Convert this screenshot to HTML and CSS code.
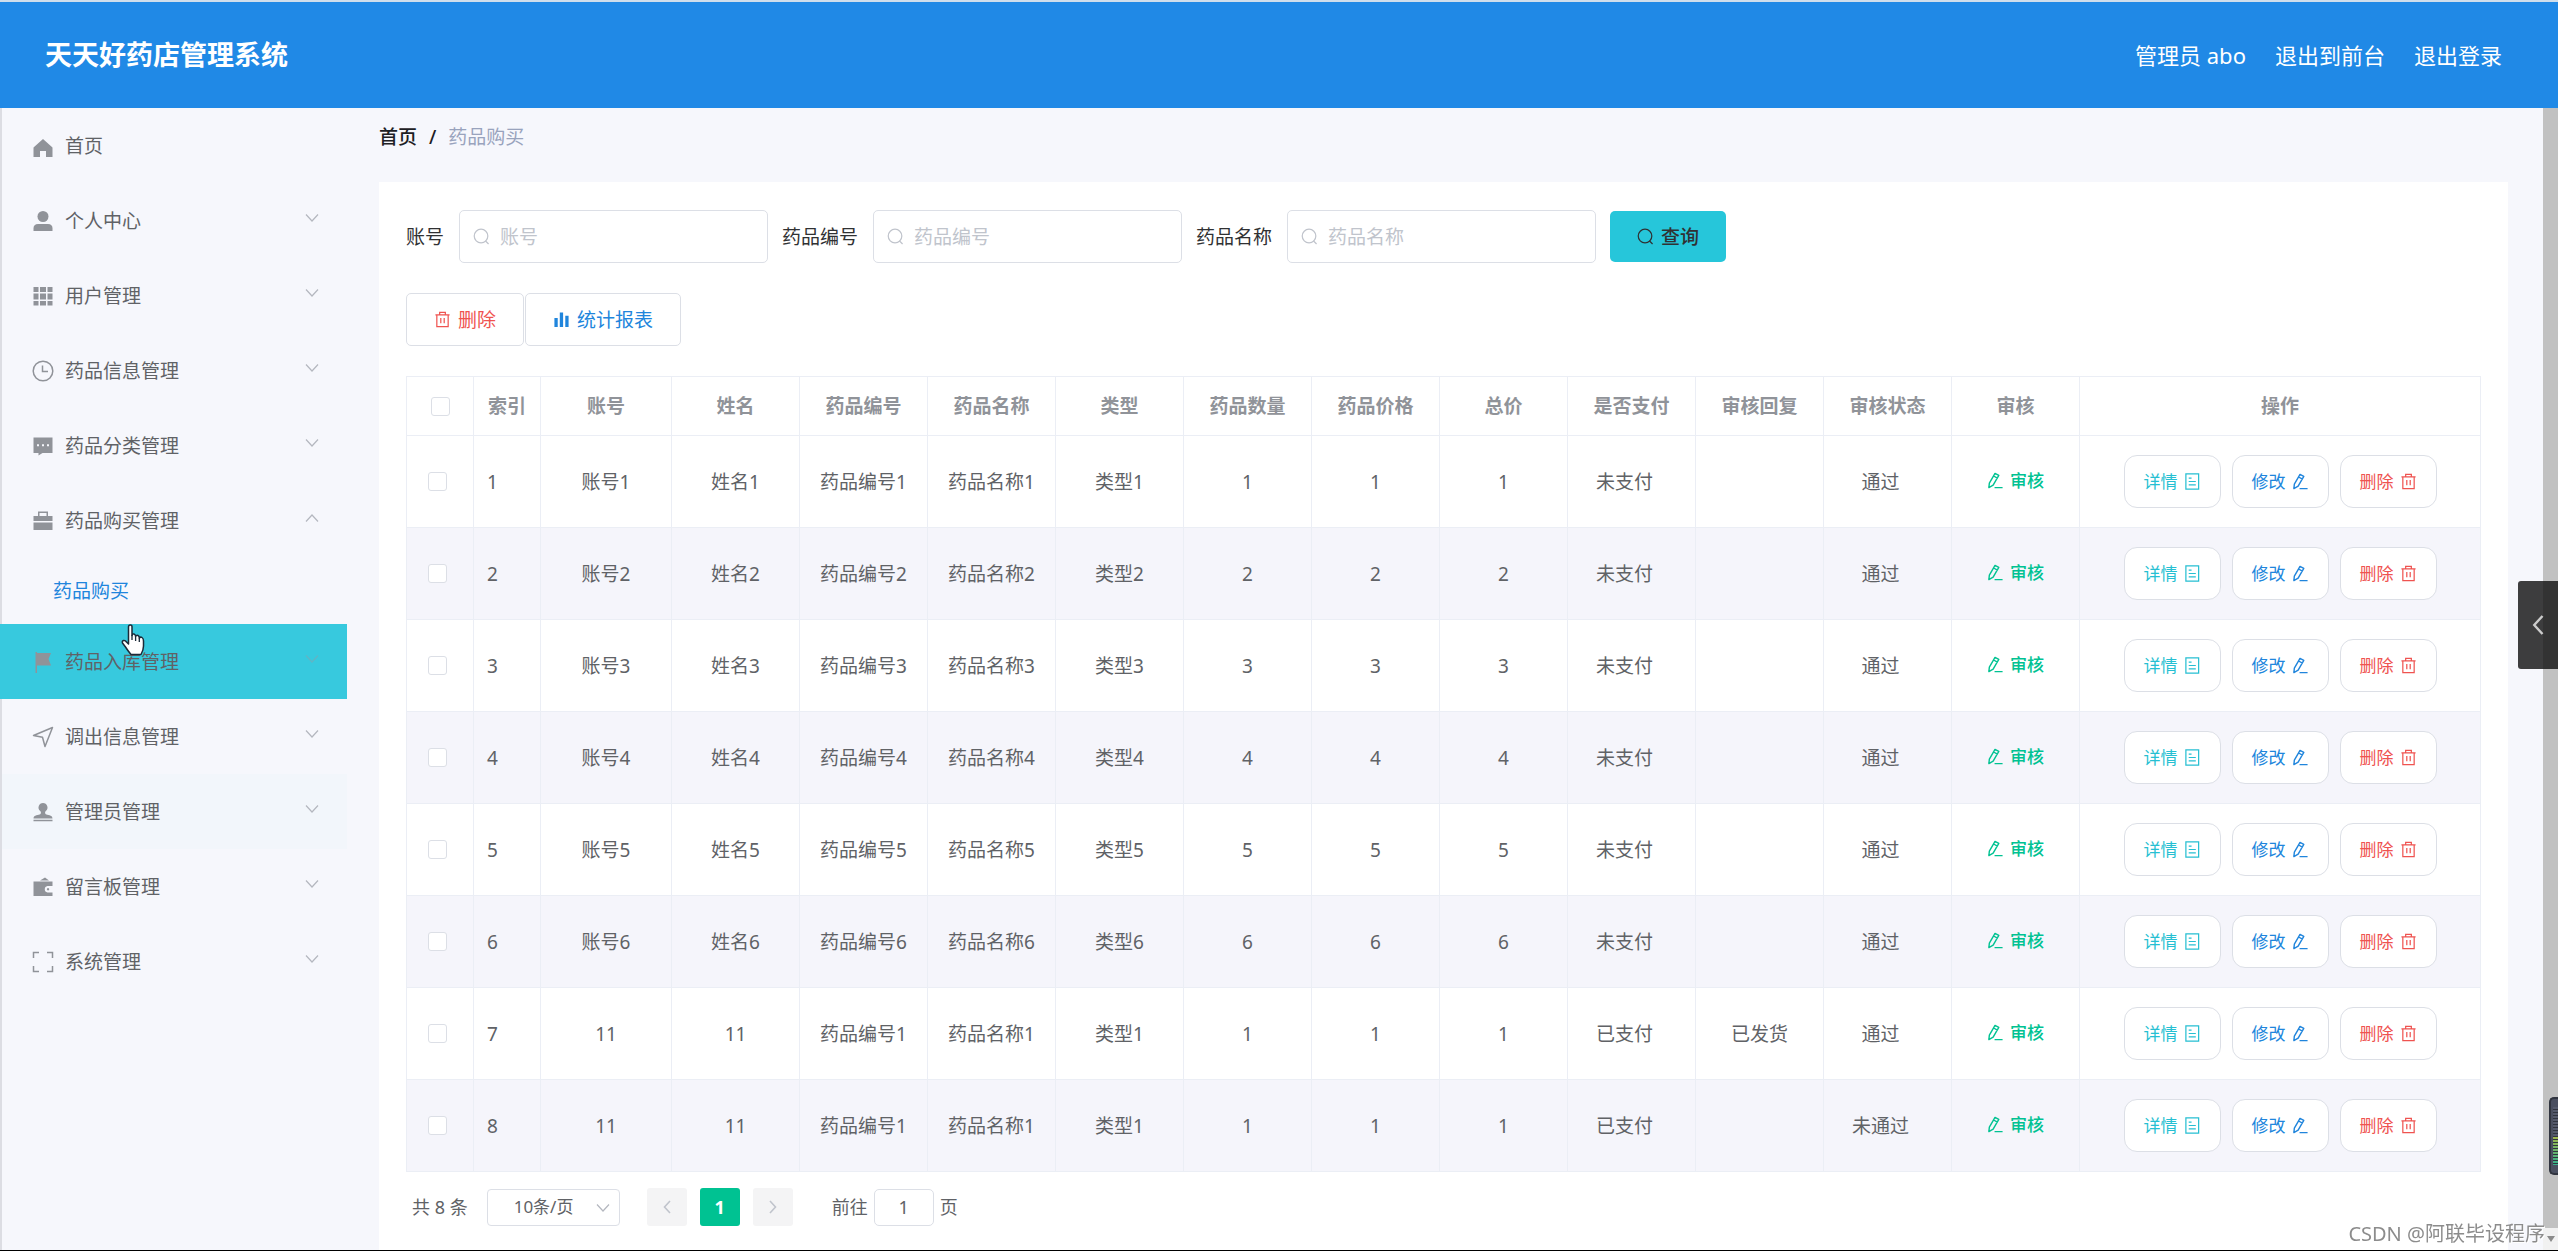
FILE: index.html
```
<!DOCTYPE html>
<html lang="zh-CN">
<head>
	<meta charset="utf-8">
	<title>天天好药店管理系统</title>
	<link rel="stylesheet" href="styles.css">
</head>
<body>

<svg class="sprite" aria-hidden="true">
	<symbol id="i-home" viewBox="0 0 22 22"><path d="M11 4L1.500 12.500V22H8V16H14V22H20.500V12.500Z"/></symbol>
	<symbol id="i-user" viewBox="0 0 22 22"><circle cx="11" cy="6.500" r="5.500"/><path d="M1.500 21V18.500Q1.500 14 6 14H16Q20.500 14 20.500 18.500V21Z"/></symbol>
	<symbol id="i-grid" viewBox="0 0 22 22"><path d="M1.500 2h5v5h-5zM8 2h6v5H8zM15.500 2h5v5h-5zM1.500 8.500h5v6h-5zM8 8.500h6v6H8zM15.500 8.500h5v6h-5zM1.500 16h5v4.500h-5zM8 16h6v4.500H8zM15.500 16h5v4.500h-5z"/></symbol>
	<symbol id="i-time" viewBox="0 0 22 22"><g fill="none" stroke="currentColor" stroke-width="1.500"><circle cx="11" cy="11" r="9.800"/><path d="M10.500 5.500V11.500H16"/></g></symbol>
	<symbol id="i-chat" viewBox="0 0 22 22"><path fill-rule="evenodd" d="M1.500 2.500h19v15.500h-10L6.500 20.500V18h-5zM5 9.200v2h2v-2zM10 9.200v2h2v-2zM15 9.200v2h2v-2z"/></symbol>
	<symbol id="i-case" viewBox="0 0 22 22"><path fill-rule="evenodd" d="M6 6V1.500h10V6h4.500v5h-19V6zM7.500 6h7V3h-7zM1.500 12.500h19v7.500h-19z"/></symbol>
	<symbol id="i-flag" viewBox="0 0 22 22"><path d="M3.500 1h1.500v1h14L16.500 8L19 14.500H5V22H3.500z"/></symbol>
	<symbol id="i-send" viewBox="0 0 22 22"><path fill="none" stroke="currentColor" stroke-width="1.500" stroke-linejoin="round" d="M1.500 9.500L20.500 1.500L13 20.500L10.500 11.200Z"/></symbol>
	<symbol id="i-admin" viewBox="0 0 22 22"><path d="M11 2a4.500 4.500 0 0 1 2.800 8c-1 1-1 2.500 0 3.200C15 14 20.500 13.500 20.500 17.500h-19C1.500 13.500 7 14 8.200 13.200c1-.7 1-2.200 0-3.200A4.500 4.500 0 0 1 11 2zM1.500 18.800h19v1.500h-19z"/></symbol>
	<symbol id="i-wallet" viewBox="0 0 22 22"><path fill-rule="evenodd" d="M8 4.500L13 1.500L17 4.500ZM1.500 5.500h19v4.500H15.500a3.300 3.300 0 0 0 0 6.500h5V20h-19zM16 12a1.200 1.200 0 1 0 .1 0z"/></symbol>
	<symbol id="i-full" viewBox="0 0 22 22"><path fill="none" stroke="currentColor" stroke-width="1.500" d="M1.500 7V1.500H7M15 1.500h5.500V7M20.500 15v5.500H15M7 20.500H1.500V15"/></symbol>
	<symbol id="i-down" viewBox="0 0 16 16"><path fill="none" stroke="currentColor" stroke-width="1.200" d="M2 4.500L8 11L14 4.500"/></symbol>
	<symbol id="i-up" viewBox="0 0 16 16"><path fill="none" stroke="currentColor" stroke-width="1.200" d="M2 11.500L8 5L14 11.500"/></symbol>
	<symbol id="i-left" viewBox="0 0 16 16"><path fill="none" stroke="currentColor" stroke-width="1.600" d="M11 2L5.500 8L11 14"/></symbol>
	<symbol id="i-right" viewBox="0 0 16 16"><path fill="none" stroke="currentColor" stroke-width="1.600" d="M5 2L10.500 8L5 14"/></symbol>
	<symbol id="i-search" viewBox="0 0 18 18"><g fill="none" stroke="currentColor" stroke-width="1.300"><circle cx="8.500" cy="8.500" r="7.200"/><path d="M13 13.500L16.500 17"/></g></symbol>
	<symbol id="i-trash" viewBox="0 0 18 18"><path fill="none" stroke="currentColor" stroke-width="1.300" d="M1.500 4H16.500M6 4V1.500H12V4M3 4V16.500H15V4M7.200 7.500V13M10.800 7.500V13"/></symbol>
	<symbol id="i-chart" viewBox="0 0 18 18"><path d="M1.500 7.500h3.500V17H1.500zM7.200 1.500h3.500V17H7.200zM13 5h3.500v12H13z"/></symbol>
	<symbol id="i-edit" viewBox="0 0 18 18"><path fill="none" stroke="currentColor" stroke-width="1.500" stroke-linejoin="round" d="M8.500 1.500L12.500 3.500L6.500 14L2 16.500L2.500 11.800ZM7.500 4.500L11 6.500M8 16.500H16.500"/></symbol>
	<symbol id="i-doc" viewBox="0 0 18 18"><path fill="none" stroke="currentColor" stroke-width="1.300" d="M2 1H15.500V17H2zM5 5.500H8M5 9H12.500M5 12.500H12.500"/></symbol>
</svg>

<header class="header">
	<h1 class="header-title">天天好药店管理系统</h1>
	<nav class="header-links">
		<span>管理员 abo</span>
		<a href="#">退出到前台</a>
		<a href="#">退出登录</a>
	</nav>
</header>

<div class="container">
	<aside class="sidebar">
		<ul class="menu">
			<li><a class="menu-item" href="#"><svg class="menu-icon"><use href="#i-home"/></svg>首页</a></li>
			<li><a class="menu-item" href="#"><svg class="menu-icon"><use href="#i-user"/></svg>个人中心<svg class="arrow"><use href="#i-down"/></svg></a></li>
			<li><a class="menu-item" href="#"><svg class="menu-icon"><use href="#i-grid"/></svg>用户管理<svg class="arrow"><use href="#i-down"/></svg></a></li>
			<li><a class="menu-item" href="#"><svg class="menu-icon"><use href="#i-time"/></svg>药品信息管理<svg class="arrow"><use href="#i-down"/></svg></a></li>
			<li><a class="menu-item" href="#"><svg class="menu-icon"><use href="#i-chat"/></svg>药品分类管理<svg class="arrow"><use href="#i-down"/></svg></a></li>
			<li>
				<a class="menu-item" href="#"><svg class="menu-icon"><use href="#i-case"/></svg>药品购买管理<svg class="arrow"><use href="#i-up"/></svg></a>
				<a class="submenu-item" href="#">药品购买</a>
			</li>
			<li><a class="menu-item active" href="#"><svg class="menu-icon"><use href="#i-flag"/></svg>药品入库管理<svg class="arrow"><use href="#i-down"/></svg></a></li>
			<li><a class="menu-item" href="#"><svg class="menu-icon"><use href="#i-send"/></svg>调出信息管理<svg class="arrow"><use href="#i-down"/></svg></a></li>
			<li><a class="menu-item fading" href="#"><svg class="menu-icon"><use href="#i-admin"/></svg>管理员管理<svg class="arrow"><use href="#i-down"/></svg></a></li>
			<li><a class="menu-item" href="#"><svg class="menu-icon"><use href="#i-wallet"/></svg>留言板管理<svg class="arrow"><use href="#i-down"/></svg></a></li>
			<li><a class="menu-item" href="#"><svg class="menu-icon"><use href="#i-full"/></svg>系统管理<svg class="arrow"><use href="#i-down"/></svg></a></li>
		</ul>
	</aside>

	<main class="main">
		<nav class="breadcrumb">
			<a href="#">首页</a>
			<b>/</b>
			<span>药品购买</span>
		</nav>

		<section class="content">
			<form class="search">
				<label for="account">账号</label>
				<div class="search-box">
					<svg class="icon"><use href="#i-search"/></svg>
					<input type="text" id="account" placeholder="账号">
				</div>
				<label for="code">药品编号</label>
				<div class="search-box">
					<svg class="icon"><use href="#i-search"/></svg>
					<input type="text" id="code" placeholder="药品编号">
				</div>
				<label for="name">药品名称</label>
				<div class="search-box">
					<svg class="icon"><use href="#i-search"/></svg>
					<input type="text" id="name" placeholder="药品名称">
				</div>
				<button type="button" class="btn btn-search"><svg class="icon"><use href="#i-search"/></svg>查询</button>
			</form>

			<div class="actions">
				<button type="button" class="btn red"><svg class="icon"><use href="#i-trash"/></svg>删除</button>
				<button type="button" class="btn blue"><svg class="icon"><use href="#i-chart"/></svg>统计报表</button>
			</div>

			<table class="table">
				<colgroup>
					<col class="col-small">
					<col class="col-small">
					<col class="col-account">
					<col span="11">
					<col class="col-ops">
				</colgroup>
				<thead>
					<tr>
						<th><input type="checkbox" class="checkbox" aria-label="全选"></th>
						<th>索引</th>
						<th>账号</th>
						<th>姓名</th>
						<th>药品编号</th>
						<th>药品名称</th>
						<th>类型</th>
						<th>药品数量</th>
						<th>药品价格</th>
						<th>总价</th>
						<th>是否支付</th>
						<th>审核回复</th>
						<th>审核状态</th>
						<th>审核</th>
						<th>操作</th>
					</tr>
				</thead>
				<tbody id="rows"></tbody>
			</table>

			<div class="pagination">
				<span>共 8 条</span>
				<div class="page-size">
					<select aria-label="每页条数">
						<option>10条/页</option>
						<option>20条/页</option>
						<option>50条/页</option>
					</select>
					<svg class="arrow"><use href="#i-down"/></svg>
				</div>
				<div class="pager">
					<button type="button" aria-label="上一页" disabled><svg><use href="#i-left"/></svg></button>
					<button type="button" class="current">1</button>
					<button type="button" aria-label="下一页" disabled><svg><use href="#i-right"/></svg></button>
				</div>
				<div class="jump">
					<label for="page">前往</label>
					<input type="text" id="page" value="1">
					<span>页</span>
				</div>
			</div>
		</section>
	</main>

	<div class="scrollbar">
		<div class="scroll-thumb"></div>
		<div class="scroll-end"></div>
	</div>
</div>

<button type="button" class="drawer" aria-label="展开"><svg><use href="#i-left"/></svg></button>
<div class="meter"><div class="meter-bars"></div></div>
<div class="watermark">CSDN @阿联毕设程序</div>

<svg class="cursor" viewBox="0 0 24 32"><path fill="#fff" stroke="#1b2a38" stroke-width="1.500" stroke-linejoin="round" d="M7.500 3Q7.500 1 9.300 1T11 3V11.500Q11.500 9.500 13 10T14.600 12.500Q15.500 10.800 17 11.500T18.300 14Q19.500 12.500 21 13.500T22.500 17V22Q22.500 26 20 30.500H10Q7 27 4.500 23L1.500 19Q.8 17 2.500 16.500T5.500 18L7.500 20Z"/><path fill="none" stroke="#1b2a38" stroke-width="1.300" d="M11 11V16M14.600 12.500V17M18.300 14V18"/></svg>

<script src="script.js"></script>
</body>
</html>
```

FILE: styles.css
```
* {
	box-sizing: border-box;
}
body {
	display: flex;
	flex-direction: column;
	height: 100vh;
	margin: 0;
	overflow: hidden;
	border-top: 2px solid #cfdeec;
	border-bottom: 1px solid #000;
	background: #f6f7fc;
	color: #606266;
	font-family: "Noto Sans", "Noto Sans CJK SC", sans-serif;
	font-size: 19px;
	line-height: 28px;
}
a {
	color: inherit;
	text-decoration: none;
}
button, input, select {
	font: inherit;
	color: inherit;
}
svg {
	fill: currentColor;
	flex: none;
}
.sprite {
	position: absolute;
	width: 0;
	height: 0;
}
.icon {
	width: 17px;
	height: 17px;
}

/* header */
.header {
	display: flex;
	flex: none;
	align-items: center;
	justify-content: space-between;
	height: 106px;
	padding: 0 56px 0 45px;
	background: #2089e6;
	color: #fff;
}
.header-title {
	margin: 0;
	font-size: 27px;
	line-height: 40px;
}
.header-links {
	display: flex;
	gap: 29px;
	font-size: 22px;
	line-height: 32px;
}

.container {
	display: flex;
	flex: 1;
	min-height: 0;
}

/* sidebar */
.sidebar {
	flex: none;
	width: 347px;
	border-left: 2px solid #dcdde3;
}
.menu {
	margin: 0;
	padding: 0;
	list-style: none;
}
.menu-item {
	display: flex;
	align-items: center;
	height: 75px;
	padding: 0 27px 0 30px;
}
.menu-item.active {
	margin-left: -2px;
	padding-left: 32px;
	background: #37c9de;
}
.menu-item.fading {
	background: #f2f6fb;
}
.menu-icon {
	width: 22px;
	height: 22px;
	margin-right: 11px;
	color: #909399;
}
.arrow {
	width: 16px;
	height: 16px;
	color: #b4b7bf;
}
.menu-item .arrow {
	margin: 0 0 5px auto;
}
.active .arrow {
	color: #62b4c4;
}
.submenu-item {
	display: flex;
	align-items: center;
	height: 66px;
	padding-left: 51px;
	color: #2085dc;
}

/* main */
.main {
	display: flex;
	flex: 1;
	flex-direction: column;
	min-width: 0;
	padding: 0 35px 0 32px;
}
.breadcrumb {
	display: flex;
	gap: 12px;
	padding: 15px 0 31px;
	color: #99a3bd;
}
.breadcrumb a, .breadcrumb b {
	color: #1d2024;
	font-weight: 500;
}
.content {
	flex: 1;
	padding: 28px 27px 0;
	background: #fff;
}
.search {
	display: flex;
	align-items: center;
	color: #303133;
}
.search label {
	margin-right: 15px;
}
.search-box {
	position: relative;
	width: 309px;
	margin-right: 14px;
}
.search-box .icon {
	position: absolute;
	top: 18px;
	left: 14px;
	color: #c0c4cc;
}
.search-box input {
	width: 100%;
	height: 53px;
	padding: 0 14px 0 40px;
	border: 1px solid #dcdfe6;
	border-radius: 5px;
	background: #fff;
	outline: none;
}
.search-box input::placeholder {
	color: #c0c4cc;
}
.btn {
	display: flex;
	align-items: center;
	gap: 7px;
	height: 53px;
	padding: 0 27px;
	border: 1px solid #dcdfe6;
	border-radius: 5px;
	background: #fff;
}
.btn-search {
	height: 51px;
	border: 0;
	background: #26c6da;
	font-weight: 500;
}
.actions {
	display: flex;
	gap: 1px;
	margin: 30px 0;
}
.red {
	color: #ef5350;
}
.blue {
	color: #2085dc;
}
.cyan {
	color: #26bfd2;
}

/* table */
.table {
	width: 100%;
	border-collapse: collapse;
	table-layout: fixed;
}
.col-small {
	width: 67px;
}
.col-account {
	width: 131px;
}
.col-ops {
	width: 401px;
}
.table th, .table td {
	height: 92px;
	padding: 0;
	border: 1px solid #ebeef5;
	text-align: center;
}
.table th {
	height: 59px;
	color: #909399;
	font-weight: 700;
}
.table tbody tr:nth-child(even) {
	background: #f5f5fb;
}
.table .index {
	padding-left: 13px;
	text-align: left;
}
.table .check {
	padding-right: 5px;
}
.table .state {
	padding-right: 14px;
}
.checkbox {
	display: block;
	width: 19px;
	height: 19px;
	margin: 0 auto;
	border: 1px solid #dcdfe6;
	border-radius: 3px;
	background: #fff;
	appearance: none;
}
.audit {
	display: inline-flex;
	align-items: center;
	gap: 6px;
	padding: 0;
	border: 0;
	background: none;
	color: #00c292;
	font-size: 17px;
	font-weight: 500;
}
.ops {
	display: flex;
	justify-content: center;
	gap: 11px;
}
.btn-op {
	gap: 6px;
	padding: 0 19px;
	border-radius: 13px;
	font-size: 17px;
}

/* pagination */
.pagination {
	display: flex;
	align-items: center;
	padding: 16px 6px 0;
	font-size: 18px;
}
.page-size {
	position: relative;
	margin: 0 27px 0 19px;
}
.page-size select {
	width: 133px;
	height: 37px;
	padding: 0 26px;
	border: 1px solid #dcdfe6;
	border-radius: 4px;
	background: #fff;
	font-size: 17px;
	appearance: none;
}
.page-size .arrow {
	position: absolute;
	top: 11px;
	right: 9px;
}
.pager {
	display: flex;
	gap: 13px;
	margin-right: 39px;
}
.pager button {
	display: flex;
	align-items: center;
	justify-content: center;
	width: 40px;
	height: 38px;
	padding: 0;
	border: 0;
	border-radius: 3px;
	background: #f4f4f5;
	color: #c0c4cc;
}
.pager .current {
	background: #00c292;
	color: #fff;
	font-weight: 700;
}
.pager svg {
	width: 16px;
	height: 16px;
}
.jump {
	display: flex;
	align-items: center;
	gap: 6px;
}
.jump input {
	width: 60px;
	height: 37px;
	padding: 0;
	border: 1px solid #dcdfe6;
	border-radius: 5px;
	background: #fff;
	text-align: center;
}

/* right edge */
.scrollbar {
	display: flex;
	flex: none;
	flex-direction: column;
	width: 15px;
	background: #f1f1f1;
}
.scroll-thumb {
	flex: 1;
	background: #c1c1c1;
}
.scroll-end {
	height: 22px;
	padding: 8px 4px;
}
.scroll-end::before {
	content: '';
	display: block;
	border: 4px solid transparent;
	border-top: 6px solid #8b8b8b;
	border-bottom: 0;
}
.drawer {
	position: fixed;
	top: 581px;
	right: 0;
	display: flex;
	align-items: center;
	justify-content: center;
	width: 40px;
	height: 88px;
	padding: 0;
	border: 0;
	border-radius: 3px 0 0 3px;
	background: rgba(20, 20, 20, .82);
	color: #ccc;
}
.drawer svg {
	width: 24px;
	height: 24px;
}
.meter {
	position: fixed;
	right: 0;
	bottom: 76px;
	width: 9px;
	height: 78px;
	padding: 8px 0 8px 2px;
	border: 2px solid #30343f;
	border-right: 0;
	border-radius: 5px 0 0 5px;
	background: #4a4f60;
}
.meter-bars {
	height: 100%;
	background: repeating-linear-gradient(transparent 0 2px, #30343f 2px 3px), linear-gradient(#555a6c 50%, #a3b84a 50%, #35b08c);
}
.watermark {
	position: fixed;
	right: 13px;
	bottom: 3px;
	color: #8c8c8c;
	font-size: 20px;
	text-shadow: 1px 1px 0 #fff;
}
.cursor {
	position: absolute;
	top: 624px;
	left: 121px;
	width: 24px;
	height: 32px;
}
```

FILE: script.js
```
var rows = [
	['账号1', '姓名1', '药品编号1', '药品名称1', '类型1', 1, 1, 1, '未支付', '', '通过'],
	['账号2', '姓名2', '药品编号2', '药品名称2', '类型2', 2, 2, 2, '未支付', '', '通过'],
	['账号3', '姓名3', '药品编号3', '药品名称3', '类型3', 3, 3, 3, '未支付', '', '通过'],
	['账号4', '姓名4', '药品编号4', '药品名称4', '类型4', 4, 4, 4, '未支付', '', '通过'],
	['账号5', '姓名5', '药品编号5', '药品名称5', '类型5', 5, 5, 5, '未支付', '', '通过'],
	['账号6', '姓名6', '药品编号6', '药品名称6', '类型6', 6, 6, 6, '未支付', '', '通过'],
	['11', '11', '药品编号1', '药品名称1', '类型1', 1, 1, 1, '已支付', '已发货', '通过'],
	['11', '11', '药品编号1', '药品名称1', '类型1', 1, 1, 1, '已支付', '', '未通过']
];

function icon(name) {
	return '<svg class="icon"><use href="#i-' + name + '"/></svg>';
}

function opButton(color, text, name) {
	return '<button type="button" class="btn btn-op ' + color + '">' + text + icon(name) + '</button>';
}

var html = '';
rows.forEach(function(row, i) {
	html += '<tr><td class="check"><input type="checkbox" class="checkbox" aria-label="选择第' + (i + 1) + '行"></td>';
	html += '<td class="index">' + (i + 1) + '</td>';
	row.forEach(function(cell, n) {
		html += '<td' + (n == 8 || n == 10 ? ' class="state"' : '') + '>' + cell + '</td>';
	});
	html += '<td><button type="button" class="audit">' + icon('edit') + '审核</button></td>';
	html += '<td><div class="ops">' + opButton('cyan', '详情', 'doc') + opButton('blue', '修改', 'edit') + opButton('red', '删除', 'trash') + '</div></td></tr>';
});
document.getElementById('rows').innerHTML = html;
```
